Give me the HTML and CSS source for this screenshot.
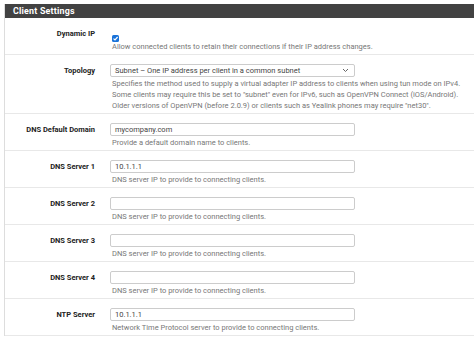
FILE: index.html
```html
<!DOCTYPE html>
<html lang="en">
<head>
    <meta charset="UTF-8">
    <title>Client Settings</title>
    <link rel="stylesheet" href="styles.css">
</head>
<body>
    <div class="panel">
        <div class="panel-heading">Client Settings</div>

        <div class="row">
            <div class="label">Dynamic IP</div>
            <div class="field">
                <div class="check-wrap">
                    <span class="check">
                        <svg width="7" height="7" viewBox="0 0 7 7"><polyline points="1.5,3.6 3,5 5.6,2" fill="none" stroke="#fff" stroke-width="1.2"/></svg>
                    </span>
                </div>
                <div class="help">Allow connected clients to retain their connections if their IP address changes.</div>
            </div>
        </div>

        <div class="row">
            <div class="label">Topology</div>
            <div class="field">
                <div class="input select">
                    <span>Subnet – One IP address per client in a common subnet</span>
                    <svg class="chev" width="7" height="5" viewBox="0 0 7 5"><polyline points="1,1 3.5,3.5 6,1" fill="none" stroke="#666" stroke-width="1"/></svg>
                </div>
                <div class="help">Specifies the method used to supply a virtual adapter IP address to clients when using tun mode on IPv4.<br>Some clients may require this be set to "subnet" even for IPv6, such as OpenVPN Connect (iOS/Android).<br>Older versions of OpenVPN (before 2.0.9) or clients such as Yealink phones may require "net30".</div>
            </div>
        </div>

        <div class="row">
            <div class="label">DNS Default Domain</div>
            <div class="field">
                <div class="input">mycompany.com</div>
                <div class="help">Provide a default domain name to clients.</div>
            </div>
        </div>

        <div class="row">
            <div class="label">DNS Server 1</div>
            <div class="field">
                <div class="input">10.1.1.1</div>
                <div class="help">DNS server IP to provide to connecting clients.</div>
            </div>
        </div>

        <div class="row">
            <div class="label">DNS Server 2</div>
            <div class="field">
                <div class="input"></div>
                <div class="help">DNS server IP to provide to connecting clients.</div>
            </div>
        </div>

        <div class="row">
            <div class="label">DNS Server 3</div>
            <div class="field">
                <div class="input"></div>
                <div class="help">DNS server IP to provide to connecting clients.</div>
            </div>
        </div>

        <div class="row">
            <div class="label">DNS Server 4</div>
            <div class="field">
                <div class="input"></div>
                <div class="help">DNS server IP to provide to connecting clients.</div>
            </div>
        </div>

        <div class="row">
            <div class="label">NTP Server</div>
            <div class="field">
                <div class="input">10.1.1.1</div>
                <div class="help">Network Time Protocol server to provide to connecting clients.</div>
            </div>
        </div>
    </div>
</body>
</html>
```

FILE: styles.css
```css
body {
    margin: 0;
    padding: 4px 0 0 4px;
    background: #fff;
    font-family: Roboto, "Liberation Sans", Arial, sans-serif;
}
.panel {
    border-left: 1px solid #ddd;
}
.panel-heading {
    background: #424242;
    color: #fff;
    font-weight: 700;
    font-size: 8.9px;
    height: 14px;
    line-height: 14px;
    padding-left: 8px;
    letter-spacing: 0.2px;
}
.row {
    display: grid;
    grid-template-columns: 91px 1fr;
    column-gap: 14px;
    padding: 9px 0 2px;
    border-bottom: 1px solid #e8e8e8;
}
.label {
    text-align: right;
    padding-right: 1px;
    font-weight: 700;
    font-size: 7.5px;
    line-height: 13px;
    color: #222;
    white-space: nowrap;
}
.field {
    min-width: 0;
}
.input {
    box-sizing: border-box;
    width: 245px;
    height: 13px;
    border: 1px solid #ccc;
    border-radius: 2px;
    padding: 0 4px;
    font-size: 7.5px;
    line-height: 11px;
    color: #444;
    white-space: nowrap;
}
.select {
    display: flex;
    align-items: center;
    justify-content: space-between;
    padding-right: 5px;
}
.chev {
    display: block;
}
.check-wrap {
    height: 13px;
    padding-left: 2px;
}
.check {
    display: inline-block;
    width: 7px;
    height: 7px;
    margin-top: 2px;
    background: #1a73d9;
    border-radius: 1.5px;
}
.check svg {
    display: block;
}
.help {
    margin-top: 1px;
    padding-left: 2px;
    font-size: 7.5px;
    line-height: 11px;
    color: #777;
    white-space: nowrap;
}
```
